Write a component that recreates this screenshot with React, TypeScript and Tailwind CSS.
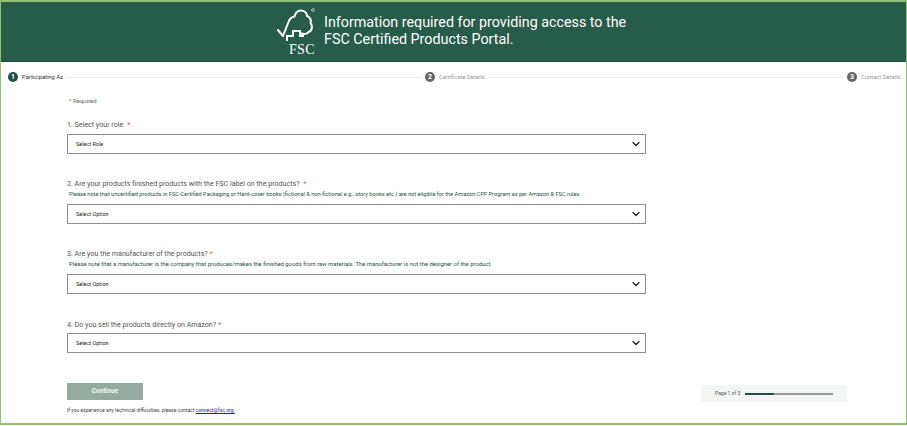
import { ChevronDown } from 'lucide-react';

const steps = [
  { num: 1, label: 'Participating As', active: true, width: 'w-[417px]' },
  { num: 2, label: 'Certificate Details', active: false, width: 'w-[422px]' },
  { num: 3, label: 'Contact Details', active: false, width: '' },
];

const questions = [
  { title: '1. Select your role', gap: true, note: '', noteSize: '', placeholder: 'Select Role', mt: 'mt-[4px]', mb: 'mb-[25px]' },
  {
    title: '2. Are your products finished products with the FSC label on the products?',
    gap: true,
    note: 'Please note that uncertified products in FSC-Certified Packaging or Hard-cover books (fictional & non-fictional e.g., story books etc.) are not eligible for the Amazon CPF Program as per Amazon & FSC rules',
    noteSize: 'text-[5.65px]',
    placeholder: 'Select Option',
    mt: 'mt-[6px]',
    mb: 'mb-[25px]',
  },
  {
    title: '3. Are you the manufacturer of the products?',
    gap: false,
    note: 'Please note that a manufacturer is the company that produces/makes the finished goods from raw materials. The manufacturer is not the designer of the product.',
    noteSize: 'text-[5.9px]',
    placeholder: 'Select Option',
    mt: 'mt-[6px]',
    mb: 'mb-[26px]',
  },
  { title: '4. Do you sell the products directly on Amazon?', gap: false, note: '', noteSize: '', placeholder: 'Select Option', mt: 'mt-[3px]', mb: 'mb-[30px]' },
];

function FscLogo() {
  return (
    <div className="flex w-[38px] flex-col items-end">
      <svg width="38" height="36" viewBox="0 0 38 36" fill="none" stroke="white" strokeWidth="2" className="block">
        {/* check mark running up into the tree outline */}
        <path
          d="M1 22l5 6 5.5-14c1-3 3-5 6-5.500 1-4 3.500-6 6.500-6 3.500 0 6 2.500 6 5.500 3 1 4.500 4 3.500 7 2.500 3 1.500 8-2 9-1 2-4.500 2.500-7 1.500"
          strokeLinejoin="round"
          strokeLinecap="round"
        />
        {/* trunk */}
        <path d="M10 33v-5h6v-5h7v5h4" strokeLinejoin="miter" />
        <circle cx="36" cy="2" r="1.400" strokeWidth="0.6" />
      </svg>
      <span className="font-['Liberation_Serif',serif] text-[14px] leading-[12px] tracking-[0.4px] text-white">FSC</span>
    </div>
  );
}

function Stepper() {
  return (
    <div className="flex items-center pr-[5px] pl-[7px]">
      {steps.map((step, index) => (
        <div key={step.num} className={`flex items-center ${step.width}`}>
          <span
            className={`flex h-[10px] w-[10px] shrink-0 items-center justify-center rounded-full text-[7px] font-bold text-white ${
              step.active ? 'bg-[#1f5244]' : 'bg-[#666666]'
            }`}
          >
            {step.num}
          </span>
          <span className={`ml-[4px] whitespace-nowrap text-[5.8px] ${step.active ? 'text-[#333333]' : 'text-[#999999]'}`}>
            {step.label}
          </span>
          {index < steps.length - 1 && <div className="mx-[4px] h-px flex-1 bg-[#e8e8e8]" />}
        </div>
      ))}
    </div>
  );
}

export default function App() {
  return (
    <div className="h-[425px] w-[907px] overflow-hidden border-x border-t-2 border-b-2 border-[#8fc274] bg-white font-['Roboto',sans-serif]">
      <header className="flex h-[60px] items-center justify-center gap-[9px] border-b border-[#1d4a3c] bg-[#275b4a]">
        <FscLogo />
        <h1 className="mb-[2px] w-[306px] text-[14.3px] leading-[17px] text-white">
          Information required for providing access to the FSC Certified Products Portal.
        </h1>
      </header>

      <div className="pt-[10px]">
        <Stepper />
      </div>

      <main className="pr-[260px] pl-[66px]">
        <p className="mt-[15px] ml-[2px] text-[6px] leading-[8px] text-[#666666]">
          <span className="text-[#e5534b]">*</span> Required
        </p>

        <div className="mt-[15px]">
          {questions.map((q) => (
            <div key={q.title} className={q.mb}>
              <p className="text-[7.1px] leading-[10px] text-[#555555]">
                {q.title}
                <span className={`text-[#e5534b] ${q.gap ? 'ml-[4px]' : 'ml-[2px]'}`}>*</span>
              </p>
              {q.note ? (
                <p className={`mt-px ml-[2px] whitespace-nowrap leading-[8px] text-[#1f5244] ${q.noteSize}`}>{q.note}</p>
              ) : null}
              <div
                className={`flex h-[20px] items-center justify-between border border-[#8c8c8c] pr-[3px] pl-[8px] text-[5.5px] text-[#222222] ${q.mt}`}
              >
                {q.placeholder}
                <ChevronDown size={12} strokeWidth={2.5} className="text-[#222222]" />
              </div>
            </div>
          ))}
        </div>

        <div className="relative">
          <button className="flex h-[17px] w-[76px] items-center justify-center bg-[#94aba2] text-[6.5px] font-bold text-[#f2f5f4]">
            Continue
          </button>
          <p className="mt-[6px] whitespace-nowrap text-[5px] leading-[8px] text-[#444444]">
            If you experience any technical difficulties, please contact{' '}
            <span className="text-[#1a1ae0] underline">connect@fsc.org.</span>
          </p>
          <div className="absolute top-[2px] left-[634px] flex h-[17px] w-[146px] items-center gap-[5px] bg-[#f4f6f5] pl-[14px]">
            <span className="whitespace-nowrap text-[5px] text-[#555555]">Page 1 of 3</span>
            <div className="h-[2px] w-[88px] bg-[#999999]">
              <div className="h-full w-[29px] bg-[#1f5244]" />
            </div>
          </div>
        </div>
      </main>
    </div>
  );
}
